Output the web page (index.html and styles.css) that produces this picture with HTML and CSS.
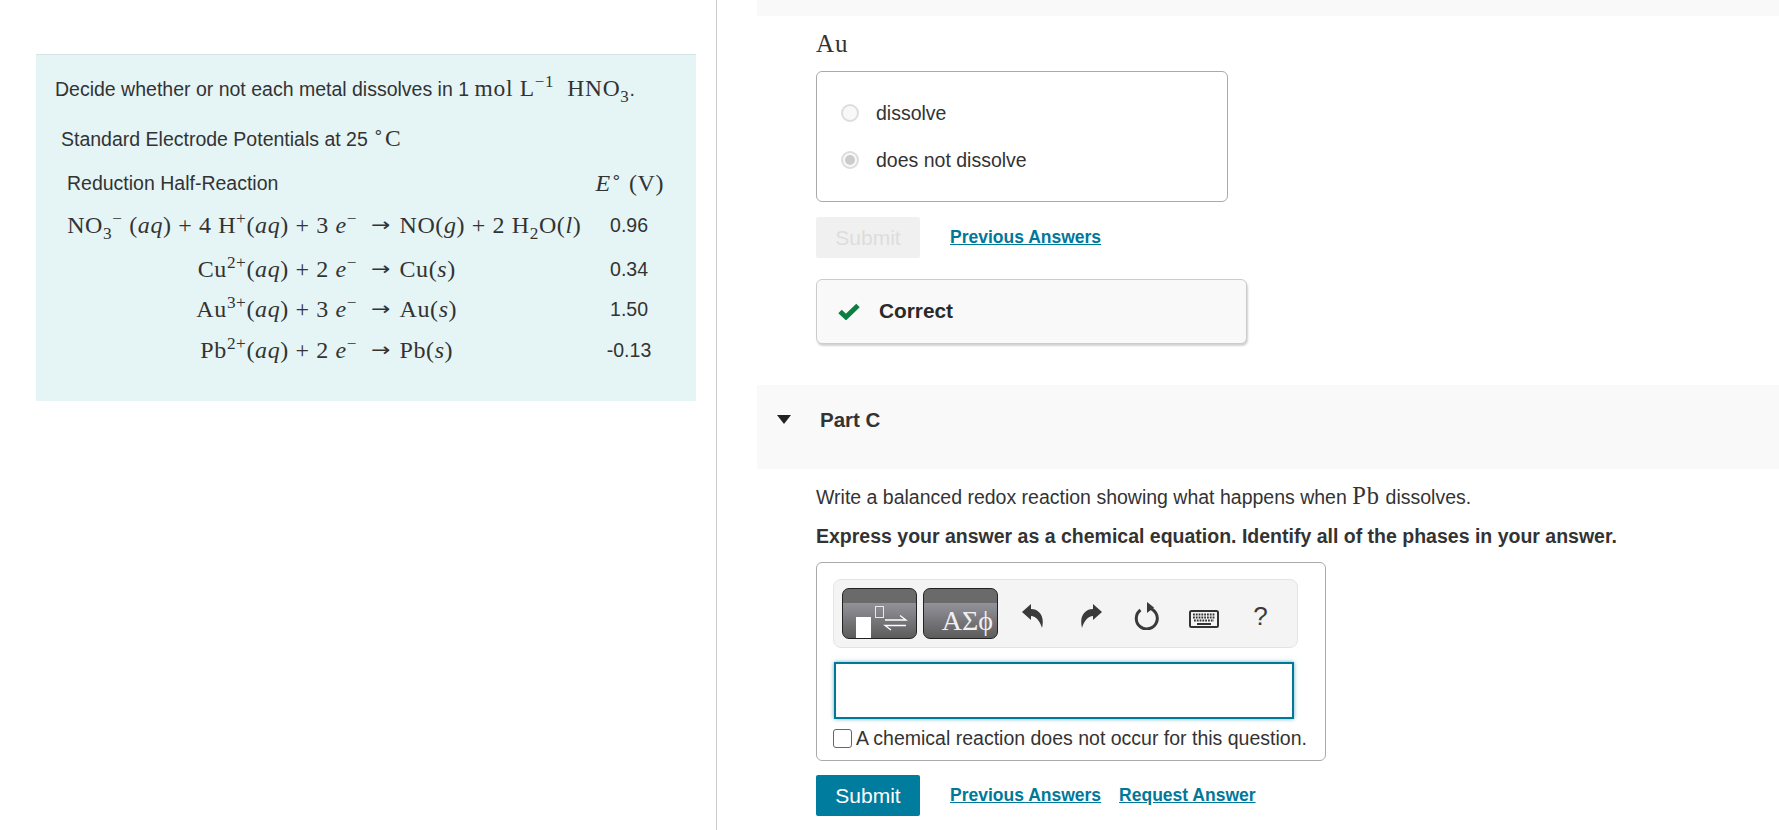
FILE: index.html
```html
<!DOCTYPE html>
<html lang="en">
<head>
<meta charset="utf-8">
<title>Part C</title>
<link rel="stylesheet" href="styles.css">
</head>
<body>
<div class="page">
  <div class="left">
    <section class="panel">
      <p class="intro">Decide whether or not each metal dissolves in 1 <span class="m">mol L<sup>−1</sup>&nbsp; HNO<sub>3</sub></span>.</p>
      <p class="caption">Standard Electrode Potentials at 25 <span class="m"><sup>∘</sup>C</span></p>
      <table class="rx">
        <colgroup><col class="c1"><col class="c2"><col class="c3"></colgroup>
        <tr class="head"><td colspan="2" class="hl">Reduction Half-Reaction</td><td class="hv m"><i>E</i><sup>∘</sup> (V)</td></tr>
        <tr class="r1">
          <td class="lhs m">NO<sub>3</sub><sup>−</sup> (<i>aq</i>) + 4 H<sup>+</sup>(<i>aq</i>) + 3 <i>e</i><sup>−</sup></td>
          <td class="rhs m"><span class="arr">→</span>NO(<i>g</i>) + 2 H<sub>2</sub>O(<i>l</i>)</td>
          <td class="val">0.96</td>
        </tr>
        <tr class="r2">
          <td class="lhs m">Cu<sup>2+</sup>(<i>aq</i>) + 2 <i>e</i><sup>−</sup></td>
          <td class="rhs m"><span class="arr">→</span>Cu(<i>s</i>)</td>
          <td class="val">0.34</td>
        </tr>
        <tr>
          <td class="lhs m">Au<sup>3+</sup>(<i>aq</i>) + 3 <i>e</i><sup>−</sup></td>
          <td class="rhs m"><span class="arr">→</span>Au(<i>s</i>)</td>
          <td class="val">1.50</td>
        </tr>
        <tr>
          <td class="lhs m">Pb<sup>2+</sup>(<i>aq</i>) + 2 <i>e</i><sup>−</sup></td>
          <td class="rhs m"><span class="arr">→</span>Pb(<i>s</i>)</td>
          <td class="val">-0.13</td>
        </tr>
      </table>
    </section>
  </div>
  <div class="right">
    <div class="part-top"></div>
    <div class="inset">
      <p class="metal m">Au</p>
      <div class="choices">
        <div class="choice"><span class="radio"></span><span>dissolve</span></div>
        <div class="choice"><span class="radio on"></span><span>does not dissolve</span></div>
      </div>
      <div class="actions first">
        <button class="submit off" type="button">Submit</button>
        <a class="link" href="#">Previous Answers</a>
      </div>
      <div class="correct">
        <svg class="check" width="22" height="17" viewBox="0 0 22 17"><path d="M2 8.5 L8 14 L20 2.5" fill="none" stroke="#0a7f3f" stroke-width="5"/></svg>
        <strong>Correct</strong>
      </div>
    </div>
    <div class="part-head">
      <span class="tri"></span>
      <strong>Part C</strong>
    </div>
    <div class="inset">
      <p class="q">Write a balanced redox reaction showing what happens when <span class="m pb">Pb</span> dissolves.</p>
      <p class="q bold">Express your answer as a chemical equation. Identify all of the phases in your answer.</p>
      <div class="answer">
        <div class="toolbar">
          <div class="tpl">
            <svg width="73" height="49" viewBox="0 0 73 49">
              <rect x="13" y="28" width="15" height="21" fill="#fff"/>
              <rect x="32.5" y="17.5" width="8" height="11" fill="none" stroke="#e8e8e8" stroke-width="1"/>
              <path d="M42 31 H63 L57 26.5 M63 36.5 H42 L48 41" fill="none" stroke="#fff" stroke-width="1.3"/>
            </svg>
          </div>
          <div class="tpl sym"><span>ΑΣϕ</span></div>
          <button class="tool undo" type="button" aria-label="Undo">
            <svg width="21" height="24" viewBox="0 0 21 24"><path d="M0 8 L9 0 V5 C17 5 23 12 20 24 C18 17 14 12 9 12 V16 Z" fill="#3a3a3a"/></svg>
          </button>
          <button class="tool redo" type="button" aria-label="Redo">
            <svg width="21" height="24" viewBox="0 0 21 24"><path d="M21 8 L12 0 V5 C4 5 -2 12 1 24 C3 17 7 12 12 12 V16 Z" fill="#3a3a3a"/></svg>
          </button>
          <button class="tool" type="button" aria-label="Reset">
            <svg width="26" height="28" viewBox="0 0 26 28"><path d="M14 6 A10.5 10.5 0 1 1 6.5 8" fill="none" stroke="#3a3a3a" stroke-width="3"/><path d="M13 0 L20 5.5 L13 11 Z" fill="#3a3a3a"/></svg>
          </button>
          <button class="tool kbd" type="button" aria-label="Keyboard">
            <svg width="30" height="18" viewBox="0 0 30 18">
              <rect x="1" y="1" width="28" height="16" rx="1.5" fill="#f4f4f4" stroke="#333" stroke-width="2"/>
              <path d="M4 4.5 H26 M4 7.5 H26 M5 10.5 H25" fill="none" stroke="#333" stroke-width="1.8" stroke-dasharray="1.8 1"/>
              <path d="M8 14 H22" stroke="#333" stroke-width="2"/>
            </svg>
          </button>
          <button class="tool qm" type="button" aria-label="Help">?</button>
        </div>
        <div class="input"></div>
        <label class="noreact"><span class="box"></span><span>A chemical reaction does not occur for this question.</span></label>
      </div>
      <div class="actions last">
        <button class="submit" type="button">Submit</button>
        <a class="link" href="#">Previous Answers</a>
        <a class="link req" href="#">Request Answer</a>
      </div>
    </div>
  </div>
</div>
</body>
</html>
```
FILE: styles.css
```css
html, body { margin: 0; padding: 0; background: #fff; }
body {
  font-family: "Liberation Sans", Arial, sans-serif;
  font-size: 19.5px;
  line-height: 26px;
  color: #333;
}
p { margin: 0; }
.page { display: flex; height: 830px; overflow: hidden; }

.left { width: 716px; flex: none; border-right: 1px solid #ccc; padding-top: 54px; box-sizing: content-box; }
.panel {
  margin-left: 36px;
  width: 660px;
  height: 347px;
  box-sizing: border-box;
  background: #e5f5f6;
  border-top: 1px solid #d3e4e6;
  padding: 20px 0 0 19px;
}
.m { font-family: "Liberation Serif", "Times New Roman", serif; font-size: 23.5px; letter-spacing: .7px; }
.m i { font-style: italic; }
sup, sub { font-size: 72%; line-height: 0; }
.intro { height: 26px; white-space: nowrap; }
.caption { margin: 24px 0 0 6px; height: 26px; }
.rx { border-collapse: collapse; table-layout: fixed; width: 637px; margin: 19px 0 0 -13px; }
.c1 { width: 315px; }
.c2 { width: 222px; }
.c3 { width: 100px; }
.rx td { padding: 0; height: 41px; white-space: nowrap; vertical-align: top; }
.rx td.m { font-size: 24px; letter-spacing: .6px; }
.rx .head td { height: 42px; }
.rx .r1 td { height: 44px; }
.rx .r2 td { height: 40px; }
.rx .hl { padding-left: 25px; }
.rx .hv { text-align: right; padding-right: 15px; }
.lhs { text-align: right; }
.rx .rhs { text-align: left; padding-left: 14px; }
.arr { display: inline-block; width: 28.5px; font-family: "DejaVu Sans", sans-serif; font-size: 23px; letter-spacing: 0; transform: scaleY(.8); }
.val { text-align: center; }

.right { flex: 1; margin-left: 40px; min-width: 0; }
.part-top { height: 16px; background: #f9f9f9; }
.inset { padding-left: 59px; }
.metal { margin-top: 15px; height: 25px; font-size: 25px; letter-spacing: 1px; }
.choices {
  margin-top: 15px;
  width: 412px;
  height: 131px;
  box-sizing: border-box;
  border: 1px solid #aaa;
  border-radius: 6px;
  padding: 17px 0 0 24px;
}
.choice { display: flex; align-items: center; gap: 17px; height: 47px; }
.radio {
  width: 18px; height: 18px; flex: none;
  box-sizing: border-box;
  border: 2px solid #ddd;
  border-radius: 50%;
  background: #f8f8f8;
  display: flex; align-items: center; justify-content: center;
}
.radio.on::after { content: ""; width: 10px; height: 10px; border-radius: 50%; background: #ccc; }

.actions { display: flex; align-items: center; }
.actions.first { margin-top: 15px; }
.actions.last { margin-top: 14px; }
.submit {
  width: 104px; height: 41px;
  border: 0; border-radius: 2px;
  background: #007c9e;
  color: #fff;
  font: 21px/26px "Liberation Sans", Arial, sans-serif;
  padding: 0;
  margin-right: 30px;
}
.submit.off { background: #f0f0f0; color: #ddd; }
.link { color: #00789a; font-weight: 700; font-size: 17.5px; text-decoration: underline; padding-bottom: 2px; }
.req { margin-left: 18px; }

.correct {
  margin-top: 21px;
  width: 431px;
  height: 65px;
  box-sizing: border-box;
  border: 1px solid #ccc;
  border-radius: 6px;
  background: #f9f9f9;
  box-shadow: 1px 2px 2px rgba(0,0,0,.18);
  display: flex; align-items: center;
  padding: 0 0 1px 21px;
}
.check { margin-right: 19px; }
.correct strong { font-size: 20.8px; color: #2a2a2a; }

.part-head {
  margin-top: 41px;
  height: 84px;
  box-sizing: border-box;
  background: #f9f9f9;
  padding: 22px 0 0 20px;
  display: flex;
  align-items: flex-start;
}
.part-head strong { margin-left: 29px; font-size: 20.5px; line-height: 25px; }
.tri {
  width: 0; height: 0; margin-top: 8px;
  border-left: 7px solid transparent;
  border-right: 7px solid transparent;
  border-top: 9px solid #222;
}

.q { margin-top: 14px; height: 26px; white-space: nowrap; }
.q .pb { font-size: 24.5px; letter-spacing: 1px; }
.q.bold { font-weight: 700; }
.answer {
  margin-top: 13px;
  width: 510px;
  height: 199px;
  box-sizing: border-box;
  border: 1px solid #aaa;
  border-radius: 6px;
  padding: 16px 0 0 16px;
}
.toolbar {
  width: 465px; height: 69px;
  box-sizing: border-box;
  background: #f4f4f4;
  border: 1px solid #e4e4e4;
  border-radius: 8px;
  padding: 8px 0 0 8px;
  display: flex;
  align-items: flex-start;
}
.tpl {
  width: 75px; height: 51px;
  box-sizing: border-box;
  border: 1px solid #222;
  border-radius: 7px;
  margin-right: 6px;
  overflow: hidden;
  background: linear-gradient(#6a6a6a 0 14px, #92929a 14px, #5c5c5c);
  flex: none;
}
.tpl svg { display: block; }
.sym { color: #f0f0f0; font-family: "Liberation Serif", serif; font-size: 28px; text-align: right; padding-right: 4px; }
.sym span { display: block; margin-top: 14px; line-height: 36px; white-space: nowrap; }
.tool {
  width: 57px; height: 51px;
  box-sizing: border-box;
  border: 0; background: none; padding: 5px 0 0;
  display: flex; align-items: center; justify-content: center;
  flex: none;
  color: #3a3a3a;
}
.redo { padding-left: 3px; }
.kbd { padding-top: 10px; }
.qm { font: 26px/1 "Liberation Sans", Arial, sans-serif; }
.input {
  margin: 14px 0 0 1px;
  width: 460px; height: 57px;
  box-sizing: border-box;
  border: 2px solid #00789a;
  box-shadow: 0 0 4px rgba(0,120,154,.6);
}
.noreact { display: flex; align-items: center; gap: 4px; margin: 8px 0 0 0; height: 21px; white-space: nowrap; }
.box {
  width: 19px; height: 19px; flex: none;
  margin-top: 2px;
  box-sizing: border-box;
  border: 1.5px solid #666;
  border-radius: 3px;
  background: #fff;
}
```
